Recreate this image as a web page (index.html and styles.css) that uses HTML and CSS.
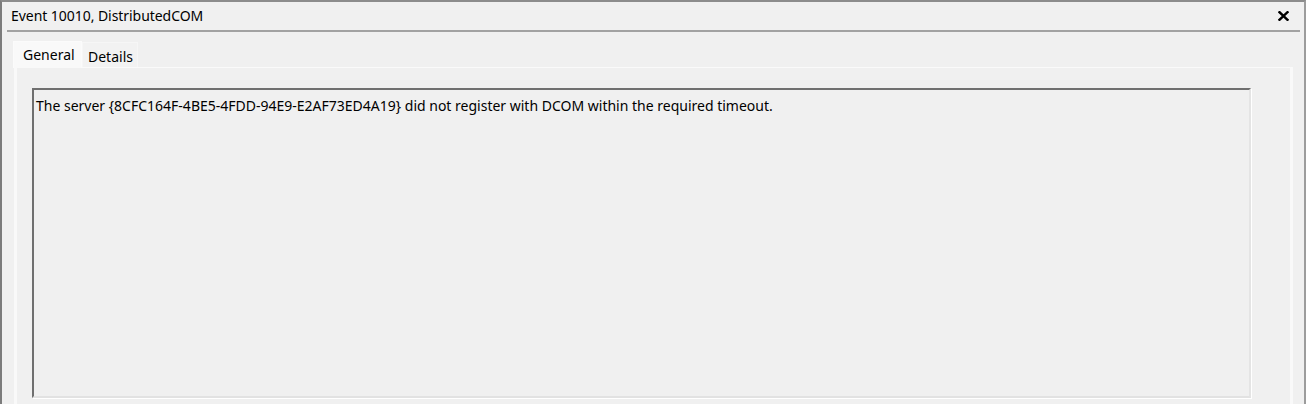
FILE: index.html
```html
<!DOCTYPE html>
<html>
<head>
<meta charset="utf-8">
<link rel="stylesheet" href="styles.css">
</head>
<body>
<div class="window">
  <div class="titlebar">
    <span class="title">Event 10010, DistributedCOM</span>
    <svg class="close" width="11" height="10" viewBox="0 0 11 10"><path d="M1.5 1.2 L9.5 8.8 M9.5 1.2 L1.5 8.8" stroke="#000" stroke-width="2.4" stroke-linecap="square"/></svg>
  </div>
  <div class="sep"></div>
  <div class="content">
    <div class="tabs">
      <div class="tab selected">General</div>
      <div class="tab">Details</div>
    </div>
    <div class="panel">
      <div class="textbox">The server {8CFC164F-4BE5-4FDD-94E9-E2AF73ED4A19} did not register with DCOM within the required timeout.</div>
    </div>
  </div>
</div>
</body>
</html>
```
FILE: styles.css
```css
html, body {
  margin: 0;
  padding: 0;
}
body {
  width: 1306px;
  height: 404px;
  overflow: hidden;
  background: #f0f0f0;
  font-family: "Noto Sans", "Open Sans", sans-serif;
  font-size: 14px;
  color: #000;
}
.window {
  box-sizing: border-box;
  width: 1306px;
  height: 404px;
  border-top: 2px solid #8c8c8c;
  border-left: 2px solid #7c7c7c;
  border-right: 2px solid #9c9c9c;
  display: flex;
  flex-direction: column;
}
.titlebar {
  height: 28px;
  display: flex;
  align-items: center;
  justify-content: space-between;
  padding: 0 15px 0 9px;
}
.title {
  font-size: 14px;
  line-height: 18px;
  letter-spacing: -0.05px;
}
.close {
  display: block;
}
.sep {
  height: 2px;
  background: #a2a2a2;
  margin: 0 4px 0 5px;
}
.content {
  flex: 1;
  padding: 9px 11px 0 11px;
  display: flex;
  flex-direction: column;
}
.tabs {
  display: flex;
  align-items: flex-end;
  height: 26px;
  position: relative;
  z-index: 1;
}
.tab {
  box-sizing: border-box;
  font-size: 14px;
}
.tab.selected {
  height: 27px;
  margin-bottom: -1px;
  width: 69px;
  padding: 0 0 0 9px;
  background: #f9f9f9;
  border: 1px solid #fbfbfb;
  border-bottom: none;
  line-height: 25px;
}
.tab.plain {
  width: 56px;
}
.tab:not(.selected) {
  width: 56px;
  height: 25px;
  padding: 0 0 0 5px;
  background: #f2f2f2;
  border: 1px solid #f6f6f6;
  border-bottom: none;
  line-height: 27px;
}
.panel {
  flex: 1;
  margin-left: 1px;
  border-top: 1px solid #fafafa;
  border-left: 3px solid #f9f9f9;
  border-right: 3px solid #f9f9f9;
  padding: 20px 39px 0 15px;
  display: flex;
  flex-direction: column;
}
.textbox {
  box-sizing: border-box;
  height: 310px;
  border-top: 2px solid #6f6f6f;
  border-left: 2px solid #6f6f6f;
  border-right: 2px solid #e4e4e4;
  border-bottom: 2px solid #e2e2e2;
  box-shadow: 1px 1px 0 #ffffff;
  padding: 6px 2px;
  line-height: 20px;
  font-size: 14px;
}
```
